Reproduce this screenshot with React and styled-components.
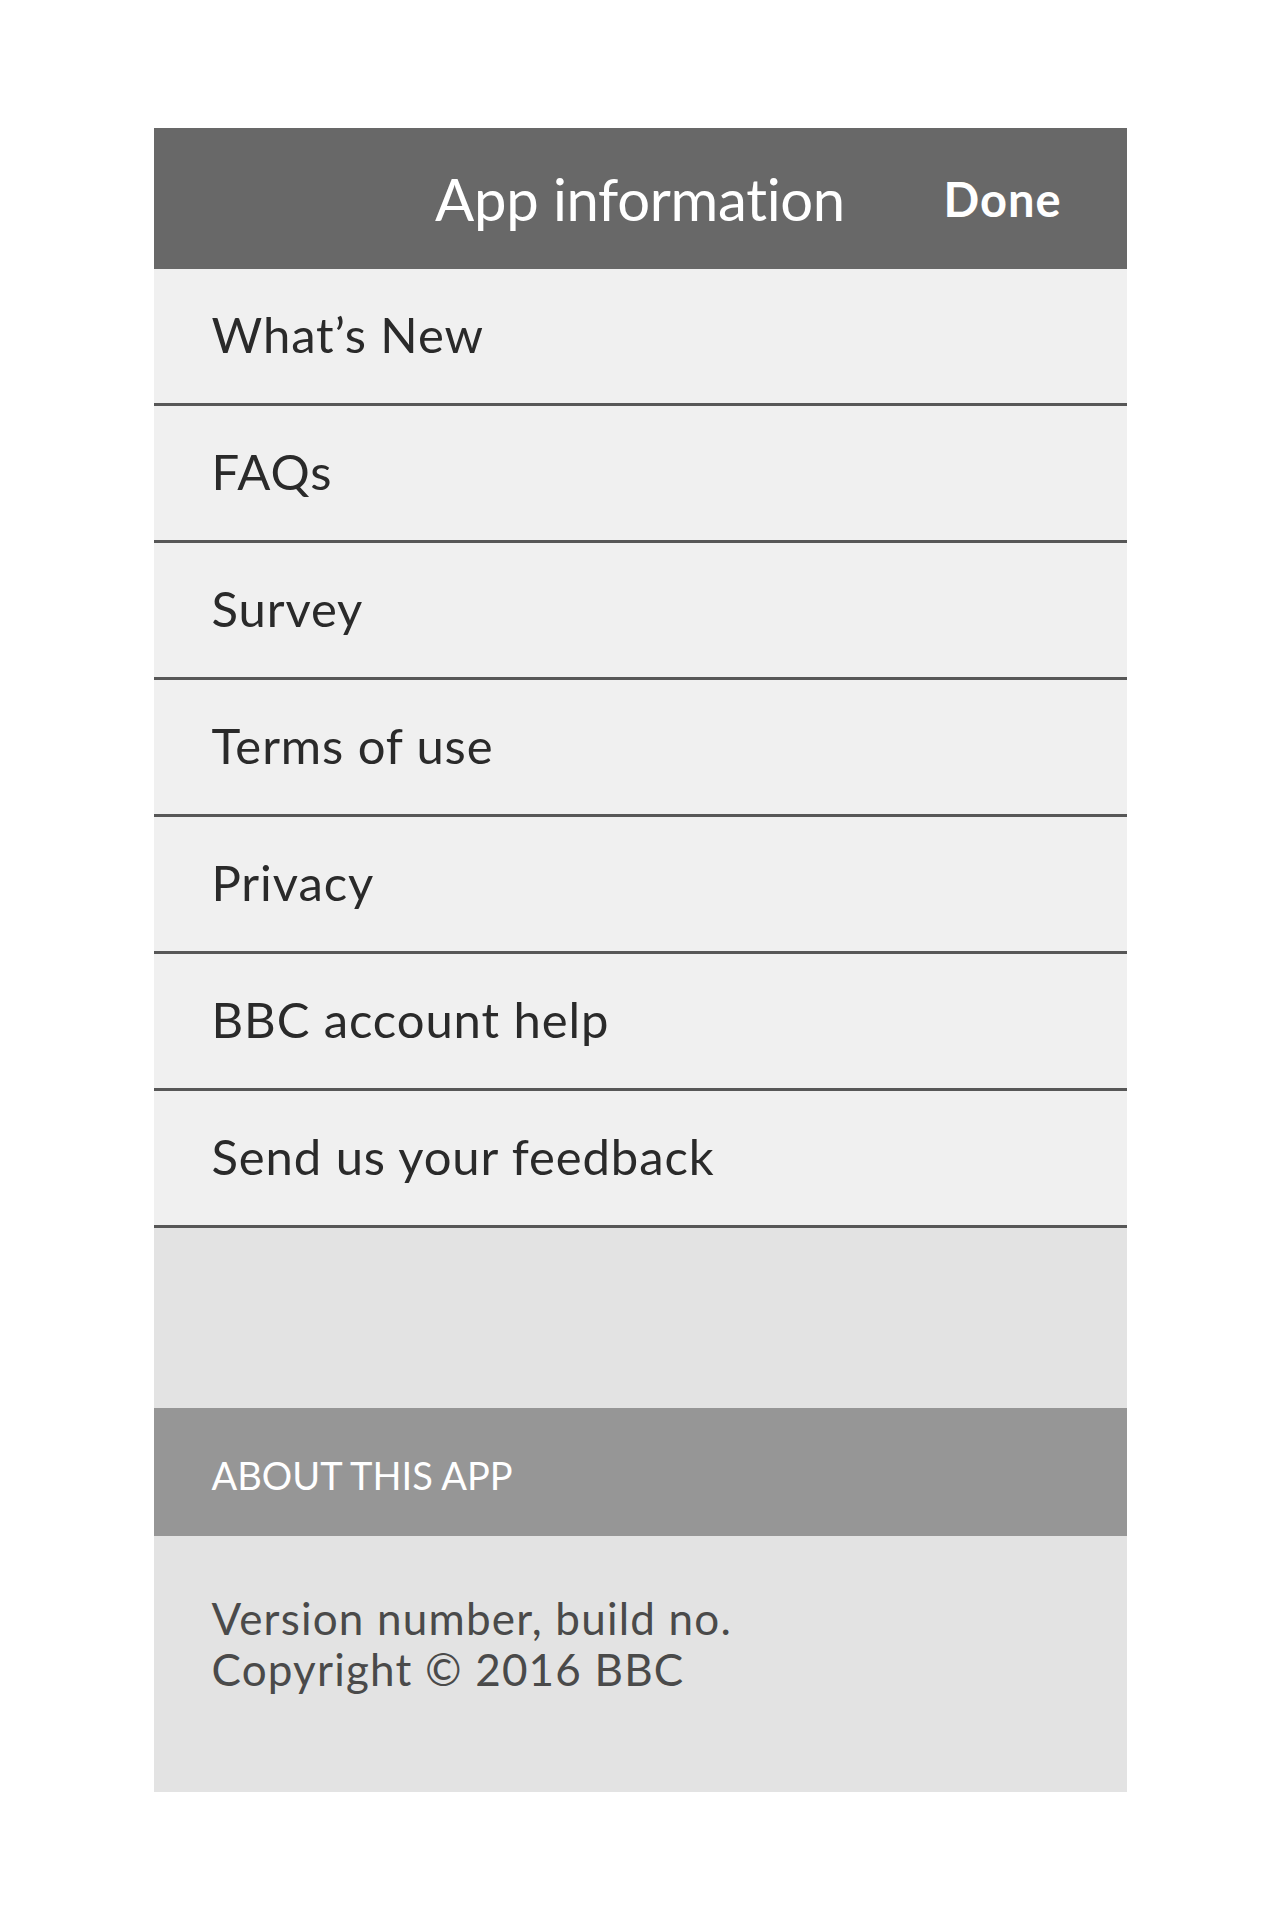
import React from 'react';
import styled, { createGlobalStyle } from 'styled-components';

const GlobalStyle = createGlobalStyle`
  body {
    margin: 0;
    background: #ffffff;
    font-family: Lato, "Open Sans", sans-serif;
  }
`;

const Panel = styled.div`
  width: 973px;
  margin: 128px auto 0;
  display: flex;
  flex-direction: column;
`;

const Header = styled.header`
  height: 141px;
  background-color: #686868;
  display: grid;
  grid-template-columns: 1fr auto 1fr;
  align-items: center;
  padding: 0 65px;
  color: #ffffff;
`;

const Title = styled.h1`
  grid-column: 2;
  margin: 0;
  font-size: 58px;
  font-weight: 400;
  letter-spacing: -0.3px;
`;

const DoneButton = styled.button`
  grid-column: 3;
  justify-self: end;
  background: none;
  border: none;
  padding: 0;
  color: #ffffff;
  font-family: inherit;
  font-size: 47px;
  font-weight: 700;
  letter-spacing: 1px;
  cursor: pointer;
`;

const Menu = styled.ul`
  list-style: none;
  margin: 0;
  padding: 0;
`;

const MenuItem = styled.li`
  height: 137px;
  display: flex;
  align-items: center;
  padding: 0 58px 4px;
  box-sizing: border-box;
  background-color: #f0f0f0;
  border-bottom: 3px solid #575757;
  color: #2a2a2a;
  font-size: 49px;
  letter-spacing: 0.9px;
`;

const Spacer = styled.div`
  height: 180px;
  background-color: #e3e3e3;
`;

const SectionTitle = styled.h2`
  margin: 0;
  height: 128px;
  box-sizing: border-box;
  display: flex;
  align-items: center;
  padding: 6px 58px 0;
  background-color: #969696;
  color: #ffffff;
  font-size: 38px;
  font-weight: 400;
`;

const About = styled.div`
  height: 256px;
  box-sizing: border-box;
  padding: 57px 58px 0;
  background-color: #e3e3e3;
  color: #4a4a4a;
  font-size: 44px;
  line-height: 51px;
  letter-spacing: 1.2px;
`;

const items = [
  'What\u2019s New',
  'FAQs',
  'Survey',
  'Terms of use',
  'Privacy',
  'BBC account help',
  'Send us your feedback',
];

const App = () => {
  return (
    <>
      <GlobalStyle />
      <Panel>
        <Header>
          <Title>App information</Title>
          <DoneButton>Done</DoneButton>
        </Header>
        <Menu>
          {items.map((item) => (
            <MenuItem key={item}>{item}</MenuItem>
          ))}
        </Menu>
        <Spacer />
        <SectionTitle>ABOUT THIS APP</SectionTitle>
        <About>
          Version number, build no.
          <br />
          Copyright © 2016 BBC
        </About>
      </Panel>
    </>
  );
};

export default App;
